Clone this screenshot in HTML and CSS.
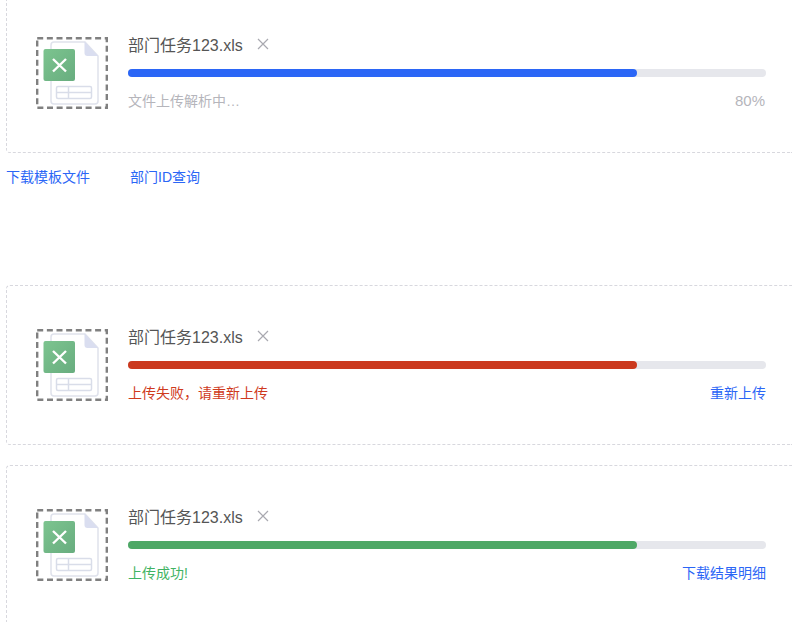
FILE: index.html
```html
<!DOCTYPE html>
<html lang="zh-CN">
<head>
    <meta charset="UTF-8">
    <meta name="viewport" content="width=device-width, initial-scale=1.0">
    <title>上传任务</title>
    <link rel="stylesheet" href="styles.css">
</head>
<body>
    <svg class="defs" width="0" height="0">
        <defs>
            <linearGradient id="xlsGreen" x1="0" y1="0" x2="1" y2="1">
                <stop offset="0" stop-color="#7cc48f"/>
                <stop offset="1" stop-color="#68ad7f"/>
            </linearGradient>
            <symbol id="xlsIcon" viewBox="0 0 72 72">
                <rect x="1.200" y="1.200" width="69.600" height="69.600" fill="none" stroke="#808080" stroke-width="2.400" stroke-dasharray="6 3.650"/>
                <path d="M18 5h31l13 14v45a3 3 0 0 1-3 3H18a3 3 0 0 1-3-3V8a3 3 0 0 1 3-3z" fill="#fff" stroke="#dfe2ec" stroke-width="1.500"/>
                <path d="M48.500 4.500l13.500 14.500h-10.500a3 3 0 0 1-3-3z" fill="#dadef0"/>
                <rect x="20.500" y="49.500" width="35" height="12" rx="1.500" fill="none" stroke="#d9dde9" stroke-width="1.500"/>
                <path d="M20.500 55.500h35M32.500 49.500v12" fill="none" stroke="#d9dde9" stroke-width="1.500"/>
                <rect x="7.500" y="12" width="31.500" height="32" rx="2" fill="url(#xlsGreen)"/>
                <path d="M17 22l13 12.500M30 22l-13 12.500" fill="none" stroke="#fff" stroke-width="2.400"/>
            </symbol>
            <symbol id="closeIcon" viewBox="0 0 12 12">
                <path d="M1 1l10 10M11 1L1 11" fill="none" stroke="#a9a9b0" stroke-width="1.200"/>
            </symbol>
        </defs>
    </svg>

    <div class="page">
        <div class="card">
            <svg class="file-icon"><use href="#xlsIcon"/></svg>
            <div class="info">
                <div class="file-row">
                    <span class="file-name">部门任务123.xls</span>
                    <svg class="remove"><use href="#closeIcon"/></svg>
                </div>
                <div class="track"><div class="fill fill-blue" style="width: 79.85%"></div></div>
                <div class="status-row">
                    <span class="muted">文件上传解析中…</span>
                    <span class="muted percent">80%</span>
                </div>
            </div>
        </div>

        <div class="links">
            <a href="#" class="link">下载模板文件</a>
            <a href="#" class="link">部门ID查询</a>
        </div>

        <div class="card">
            <svg class="file-icon"><use href="#xlsIcon"/></svg>
            <div class="info">
                <div class="file-row">
                    <span class="file-name">部门任务123.xls</span>
                    <svg class="remove"><use href="#closeIcon"/></svg>
                </div>
                <div class="track"><div class="fill fill-red" style="width: 79.85%"></div></div>
                <div class="status-row">
                    <span class="error">上传失败，请重新上传</span>
                    <a href="#" class="link">重新上传</a>
                </div>
            </div>
        </div>

        <div class="card card-done">
            <svg class="file-icon"><use href="#xlsIcon"/></svg>
            <div class="info">
                <div class="file-row">
                    <span class="file-name">部门任务123.xls</span>
                    <svg class="remove"><use href="#closeIcon"/></svg>
                </div>
                <div class="track"><div class="fill fill-green" style="width: 79.85%"></div></div>
                <div class="status-row">
                    <span class="success">上传成功!</span>
                    <a href="#" class="link">下载结果明细</a>
                </div>
            </div>
        </div>
    </div>
</body>
</html>
```

FILE: styles.css
```css
html, body {
    margin: 0;
    height: 622px;
    overflow: hidden;
    background-color: white;
}
body {
    font-family: "Liberation Sans", "Noto Sans CJK SC", sans-serif;
    font-size: 14px;
}
.defs {
    display: block;
    height: 0;
}
.page {
    width: 786px;
    margin-top: -7px;
    padding-left: 6px;
}
.card {
    display: flex;
    align-items: flex-start;
    gap: 20px;
    height: 160px;
    box-sizing: border-box;
    padding: 43px 0 0 29px;
    border: 1px dashed #d8d8de;
    border-right: none;
    border-radius: 4px 0 0 4px;
}
.card-done {
    margin-top: 20px;
}
.file-icon {
    width: 72px;
    height: 72px;
    flex: none;
}
.info {
    width: 638px;
}
.file-row {
    display: flex;
    align-items: center;
    gap: 14px;
    height: 24px;
    margin-top: -5px;
}
.file-name {
    font-size: 16px;
    color: #555;
}
.remove {
    width: 12px;
    height: 12px;
    flex: none;
}
.track {
    height: 8px;
    margin-top: 13px;
    background-color: #e6e7ec;
    border-radius: 4px;
}
.fill {
    height: 100%;
    border-radius: 4px;
}
.fill-blue {
    background-color: #2b66f6;
}
.fill-red {
    background-color: #cb391e;
}
.fill-green {
    background-color: #4ea866;
}
.status-row {
    display: flex;
    justify-content: space-between;
    align-items: center;
    height: 20px;
    margin-top: 13px;
}
.muted {
    color: #b5b5bb;
}
.percent {
    font-size: 15px;
    margin-right: 1px;
}
.error {
    color: #cf3a1d;
}
.success {
    color: #3fb363;
}
.link {
    color: #2b66f6;
    text-decoration: none;
}
.links {
    display: flex;
    gap: 40px;
    height: 132px;
    padding-top: 14px;
    box-sizing: border-box;
    line-height: 20px;
}
```
